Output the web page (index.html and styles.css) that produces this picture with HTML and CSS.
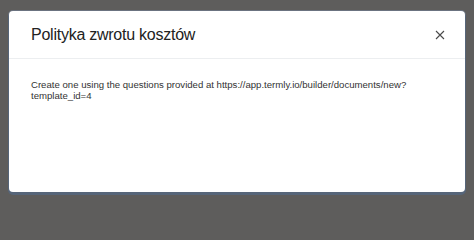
FILE: index.html
```html
<!DOCTYPE html>
<html lang="pl">
<head>
<meta charset="utf-8">
<title>Polityka zwrotu kosztów</title>
<link rel="stylesheet" href="styles.css">
</head>
<body>
<div class="backdrop">
  <div class="modal">
    <div class="modal-header">
      <h5 class="modal-title">Polityka zwrotu kosztów</h5>
      <button class="close" type="button" aria-label="Close">
        <svg width="10" height="10" viewBox="0 0 10 10"><path d="M1 1 L9 9 M9 1 L1 9" stroke="#4a4a4a" stroke-width="1.1" fill="none"/></svg>
      </button>
    </div>
    <div class="modal-body">
      <p>Create one using the questions provided at https://app.termly.io/builder/documents/new?<br>template_id=4</p>
    </div>
  </div>
</div>
</body>
</html>
```
FILE: styles.css
```css
html, body {
  margin: 0;
  padding: 0;
}
body {
  background: #5e5d5c;
  font-family: "Liberation Sans", Arial, sans-serif;
  min-height: 206px;
}
.backdrop {
  padding: 11px 9px 0 9px;
}
.modal {
  background: #fff;
  border-radius: 4px;
  height: 181px;
  box-shadow: 0 2px 0 1px #566579, 0 0 0 1px #6b7380;
  display: flex;
  flex-direction: column;
}
.modal-header {
  display: flex;
  align-items: center;
  justify-content: space-between;
  height: 47px;
  padding: 0 20px 0 22px;
  border-bottom: 1px solid #eceef0;
}
.modal-title {
  margin: 0;
  font-size: 16px;
  letter-spacing: -0.25px;
  font-weight: normal;
  color: #222;
  line-height: 1;
  padding-top: 1px;
}
.close {
  background: none;
  border: 0;
  padding: 0;
  margin: 0;
  width: 10px;
  height: 10px;
  display: flex;
}
.modal-body {
  padding: 20px 22px;
}
.modal-body p {
  margin: 0;
  font-size: 9.6px;
  line-height: 11px;
  color: #333;
}
```
